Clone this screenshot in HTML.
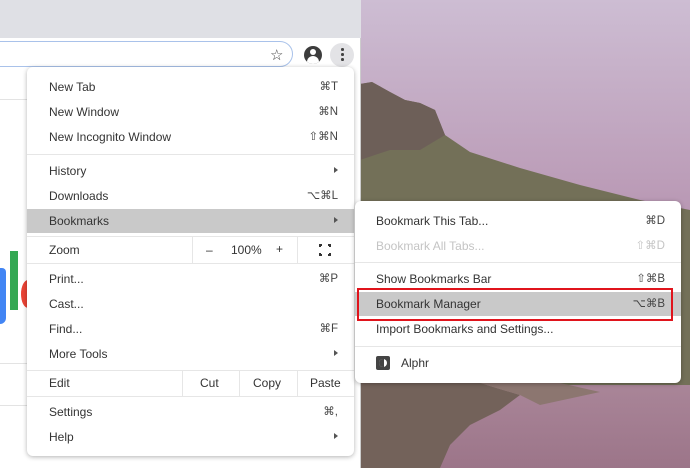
<!DOCTYPE html>
<html><head><meta charset="utf-8"><style>
*{margin:0;padding:0;box-sizing:border-box}
body{width:690px;height:468px;overflow:hidden;position:relative;font-family:"Liberation Sans",sans-serif;font-size:12px;color:#333;background:#b695ad}
.a{position:absolute}
.t{position:absolute;left:22px;line-height:14px}
.k{position:absolute;right:16px;line-height:14px;color:#444;font-size:11.5px}
.arr{position:absolute;right:16px;width:0;height:0;border-left:4px solid #555;border-top:3.5px solid transparent;border-bottom:3.5px solid transparent}
.sep{position:absolute;left:0;right:0;height:1px;background:#e6e6e6}
</style></head><body>
<svg class="a" style="left:0;top:0" width="690" height="468" viewBox="0 0 690 468">
<defs><linearGradient id="sky" x1="0" y1="0" x2="0" y2="1"><stop offset="0" stop-color="#cdbdd3"/><stop offset="0.45" stop-color="#b998b4"/><stop offset="1" stop-color="#b08da8"/></linearGradient>
<linearGradient id="w" x1="0" y1="0" x2="0" y2="1"><stop offset="0" stop-color="#a98598"/><stop offset="1" stop-color="#9c7589"/></linearGradient></defs>
<rect width="690" height="468" fill="url(#sky)"/>
<path d="M360 84 L372 82 L390 92 L405 100 L420 103 L435 110 L445 135 L470 152 L520 168 L580 185 L640 200 L690 210 L690 390 L360 390Z" fill="#737058"/>
<path d="M360 84 L372 82 L390 92 L405 100 L420 103 L435 110 L445 135 L420 150 L390 150 L360 160Z" fill="#6d5f58"/>
<rect x="360" y="385" width="330" height="83" fill="url(#w)"/>
<path d="M360 383 L480 383 L520 395 L500 410 L470 425 L450 445 L440 468 L360 468Z" fill="#73625a"/>
<path d="M480 383 L560 383 L600 392 L540 405 L520 395Z" fill="#8c7670"/>
</svg>
<div class="a" style="left:0;top:0;width:361px;height:468px;background:#fff;border-right:1px solid #ccc">
 <div class="a" style="left:0;top:0;width:361px;height:38px;background:#dfe0e5"></div>
 <div class="a" style="left:-20px;top:41px;width:313px;height:26px;border:1.5px solid #a9c2ea;border-radius:14px;background:#fff"></div>
 <div class="a" style="left:270px;top:46px;font-size:15px;color:#444">☆</div>
 <div class="a" style="left:304px;top:46px;width:18px;height:18px;border-radius:50%;background:#3c3c3c;overflow:hidden"><div class="a" style="left:6px;top:3px;width:6px;height:6px;border-radius:50%;background:#fff"></div><div class="a" style="left:3px;top:10px;width:12px;height:8px;border-radius:6px 6px 0 0;background:#fff"></div></div>
 <div class="a" style="left:330px;top:43px;width:24px;height:24px;border-radius:50%;background:#e3e3e6"></div>
 <div class="a" style="left:341px;top:48px;width:2.5px;height:2.5px;background:#444;border-radius:50%;box-shadow:0 5px 0 #444,0 10px 0 #444"></div>
 <div class="a" style="left:0;top:99px;width:30px;height:1px;background:#e3e3e3"></div>
 <div class="a" style="left:0;top:268px;width:6px;height:56px;background:#4285f4;border-radius:0 4px 6px 0"></div>
 <div class="a" style="left:10px;top:251px;width:8px;height:59px;background:#34a853"></div>
 <div class="a" style="left:21px;top:280px;width:14px;height:28px;background:#ea4335;border-radius:50%"></div>
 <div class="a" style="left:0;top:363px;width:30px;height:1px;background:#e3e3e3"></div>
 <div class="a" style="left:0;top:405px;width:30px;height:1px;background:#e3e3e3"></div>
</div>
<div class="a" style="left:27px;top:67px;width:327px;height:389px;background:#fff;border-radius:6px;box-shadow:0 1px 5px rgba(0,0,0,.3)">
 <div class="t" style="top:13px">New Tab</div><div class="k" style="top:13px">⌘T</div>
 <div class="t" style="top:38px">New Window</div><div class="k" style="top:38px">⌘N</div>
 <div class="t" style="top:63px">New Incognito Window</div><div class="k" style="top:63px">⇧⌘N</div>
 <div class="sep" style="top:87px"></div>
 <div class="t" style="top:97px">History</div><div class="arr" style="top:100px"></div>
 <div class="t" style="top:122px">Downloads</div><div class="k" style="top:122px">⌥⌘L</div>
 <div class="a" style="left:0;top:142px;width:327px;height:24px;background:#c9c9c9"></div>
 <div class="t" style="top:147px">Bookmarks</div><div class="arr" style="top:150px"></div>
 <div class="sep" style="top:169px"></div>
 <div class="t" style="top:176px">Zoom</div>
 <div class="a" style="left:165px;top:170px;width:1px;height:26px;background:#e6e6e6"></div>
 <div class="a" style="left:179px;top:176px">–</div>
 <div class="a" style="left:204px;top:176px">100%</div>
 <div class="a" style="left:249px;top:175px">+</div>
 <div class="a" style="left:270px;top:170px;width:1px;height:26px;background:#e6e6e6"></div>
 <div class="a" style="left:292px;top:177px;width:12px;height:12px;border:2px solid #333"></div>
 <div class="a" style="left:295px;top:175px;width:6px;height:16px;background:#fff"></div>
 <div class="a" style="left:290px;top:180px;width:16px;height:6px;background:#fff"></div>
 <div class="sep" style="top:196px"></div>
 <div class="t" style="top:205px">Print...</div><div class="k" style="top:205px">⌘P</div>
 <div class="t" style="top:230px">Cast...</div>
 <div class="t" style="top:255px">Find...</div><div class="k" style="top:255px">⌘F</div>
 <div class="t" style="top:280px">More Tools</div><div class="arr" style="top:283px"></div>
 <div class="sep" style="top:303px"></div>
 <div class="t" style="top:309px">Edit</div>
 <div class="a" style="left:155px;top:304px;width:1px;height:25px;background:#e6e6e6"></div>
 <div class="a" style="left:173px;top:309px">Cut</div>
 <div class="a" style="left:212px;top:304px;width:1px;height:25px;background:#e6e6e6"></div>
 <div class="a" style="left:226px;top:309px">Copy</div>
 <div class="a" style="left:270px;top:304px;width:1px;height:25px;background:#e6e6e6"></div>
 <div class="a" style="left:283px;top:309px">Paste</div>
 <div class="sep" style="top:329px"></div>
 <div class="t" style="top:338px">Settings</div><div class="k" style="top:338px">⌘,</div>
 <div class="t" style="top:363px">Help</div><div class="arr" style="top:366px"></div>
</div>
<div class="a" style="left:355px;top:201px;width:326px;height:182px;background:#fff;border-radius:6px;box-shadow:0 1px 5px rgba(0,0,0,.3)">
 <div class="t" style="left:21px;top:13px">Bookmark This Tab...</div><div class="k" style="top:13px">⌘D</div>
 <div class="t" style="left:21px;top:38px;color:#c4c4c4">Bookmark All Tabs...</div><div class="k" style="top:38px;color:#c4c4c4">⇧⌘D</div>
 <div class="sep" style="top:61px"></div>
 <div class="t" style="left:21px;top:71px">Show Bookmarks Bar</div><div class="k" style="top:71px">⇧⌘B</div>
 <div class="a" style="left:0;top:91px;width:326px;height:24px;background:#c9c9c9"></div>
 <div class="t" style="left:21px;top:96px">Bookmark Manager</div><div class="k" style="top:96px">⌥⌘B</div>
 <div class="t" style="left:21px;top:121px">Import Bookmarks and Settings...</div>
 <div class="sep" style="top:145px"></div>
 <div class="a" style="left:21px;top:155px;width:14px;height:14px;background:#444;border-radius:2px"><div class="a" style="left:3px;top:3px;width:8px;height:8px;border-radius:50%;background:#fff"></div><div class="a" style="left:3px;top:3px;width:5px;height:8px;background:#444;border-radius:4px 0 0 4px"></div></div>
 <div class="t" style="left:46px;top:155px">Alphr</div>
</div>
<div class="a" style="left:357px;top:288px;width:316px;height:33px;border:2.5px solid #e0141c"></div>
</body></html>
